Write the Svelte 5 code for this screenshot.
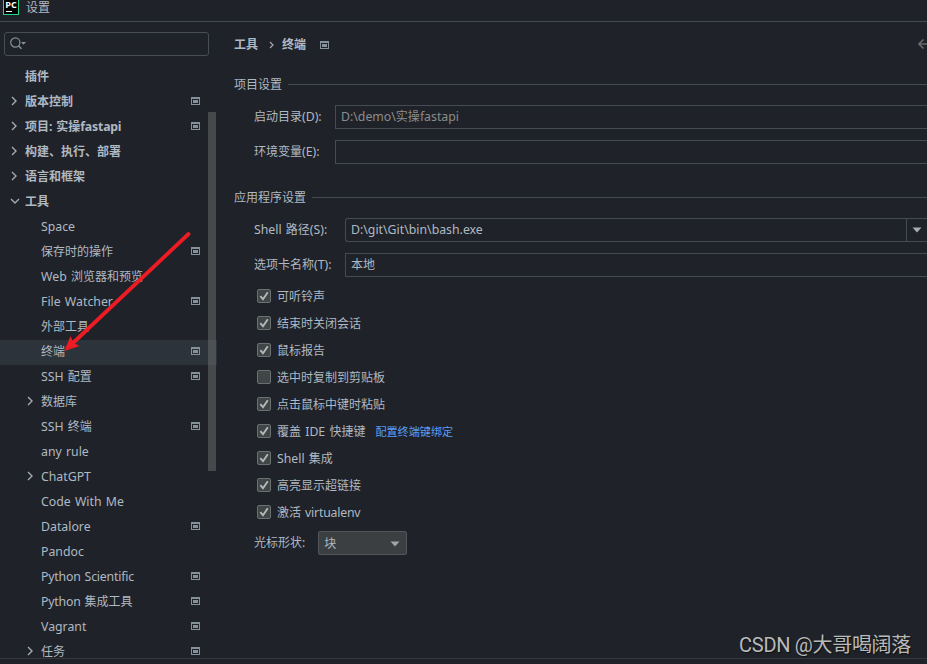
<script>
  let selected = $state("终端");
  let query = $state("");

  const tree = [
    { label: "插件", level: 0 },
    { label: "版本控制", level: 0, arrow: "right", project: true },
    { label: "项目: 实操fastapi", level: 0, arrow: "right", project: true, tight: true },
    { label: "构建、执行、部署", level: 0, arrow: "right" },
    { label: "语言和框架", level: 0, arrow: "right" },
    { label: "工具", level: 0, arrow: "down" },
    { label: "Space", level: 1 },
    { label: "保存时的操作", level: 1, project: true },
    { label: "Web 浏览器和预览", level: 1 },
    { label: "File Watcher", level: 1, project: true },
    { label: "外部工具", level: 1 },
    { label: "终端", level: 1, project: true },
    { label: "SSH 配置", level: 1, project: true },
    { label: "数据库", level: 1, arrow: "right" },
    { label: "SSH 终端", level: 1, project: true },
    { label: "any rule", level: 1 },
    { label: "ChatGPT", level: 1, arrow: "right" },
    { label: "Code With Me", level: 1 },
    { label: "Datalore", level: 1, project: true },
    { label: "Pandoc", level: 1 },
    { label: "Python Scientific", level: 1, project: true, tight: true },
    { label: "Python 集成工具", level: 1, project: true, tight: true },
    { label: "Vagrant", level: 1, project: true },
    { label: "任务", level: 1, arrow: "right", project: true },
  ];

  let options = $state([
    { label: "可听铃声", checked: true },
    { label: "结束时关闭会话", checked: true },
    { label: "鼠标报告", checked: true },
    { label: "选中时复制到剪贴板", checked: false },
    { label: "点击鼠标中键时粘贴", checked: true },
    { label: "覆盖 IDE 快捷键", checked: true, link: "配置终端键绑定" },
    { label: "Shell 集成", checked: true },
    { label: "高亮显示超链接", checked: true },
    { label: "激活 virtualenv", checked: true, tight: true },
  ]);

  // latin runs are set slightly larger than the chinese ones
  function runs(text) {
    return text.match(/[\x20-\x7e]+|[^\x20-\x7e]+/g) ?? [];
  }
</script>

{#snippet mixed(text)}<span class="mixed">{#each runs(text) as run}<span class:latin={/^[\x20-\x7e]/.test(run)}>{run}</span>{/each}</span>{/snippet}

{#snippet projectIcon()}
  <svg class="project-icon" width="9" height="8" viewBox="0 0 9 8" shape-rendering="crispEdges">
    <path fill="#84919b" fill-rule="evenodd" d="M0 0h9v8H0zM1 2v5h7V2z" />
    <path fill="#84919b" d="M2 3h5v3H2z" />
  </svg>
{/snippet}

<div class="window">
  <header class="titlebar">
    <svg class="logo" width="16" height="15" viewBox="0 0 16 15">
      <rect x="0.5" y="-0.5" width="15" height="15" fill="#000" stroke="#21d789" />
      <text x="2.300" y="8" textLength="11.500" lengthAdjust="spacingAndGlyphs">PC</text>
      <path fill="#fff" d="M3 11h6v1H3z" />
    </svg>
    <span>设置</span>
  </header>

  <div class="body">
    <aside>
      <label class="search">
        <svg width="18" height="14" viewBox="0 0 18 14" fill="none">
          <circle cx="5.3" cy="5.500" r="4.600" stroke="#84919b" stroke-width="1.2" />
          <path d="M8.500 8.800l3 3" stroke="#84919b" stroke-width="1.5" />
          <path d="M11 5h5L13.500 7.700z" fill="#84919b" />
        </svg>
        <input bind:value={query} aria-label="search" />
      </label>

      <div class="tree">
        {#each tree as item}
          <button
            class="row"
            class:group={item.level === 0}
            class:child={item.level === 1}
            class:tight={item.tight}
            class:selected={item.label === selected}
            onclick={() => (selected = item.label)}
          >
            <span class="toggle">
              {#if item.arrow}
                <svg class={item.arrow} width="10" height="10" viewBox="0 0 10 10" fill="none">
                  <path d="M2 1l4 4-4 4" stroke="#a4abb0" stroke-width="1.4" />
                </svg>
              {/if}
            </span>
            {@render mixed(item.label)}
            {#if item.project}{@render projectIcon()}{/if}
          </button>
        {/each}
        <div class="scrollbar"></div>
        <svg class="pointer" width="130" height="124" viewBox="0 0 130 124">
          <path d="M127.500 3L13 111" stroke="#ed1c24" stroke-width="3.800" stroke-linecap="round" />
          <path d="M3.300 120L9.500 105L12 110.500L14.500 113L18.500 115z" fill="#ed1c24" />
        </svg>
      </div>
    </aside>

    <main>
      <nav>
        <b>工具</b>
        <svg class="crumb" width="5" height="8" viewBox="0 0 5 8" fill="none">
          <path d="M1 1l3 3-3 3" stroke="#a4abb0" stroke-width="1.2" />
        </svg>
        <b>终端</b>
        {@render projectIcon()}
        <svg class="back" width="12" height="10" viewBox="0 0 12 10" fill="none">
          <path d="M5.500 0.500L1 5l4.500 4.500M1 5h11" stroke="#686b6a" stroke-width="1.6" />
        </svg>
      </nav>

      <h2>项目设置</h2>
      <div class="field directory">
        <span class="label">{@render mixed("启动目录(D):")}</span>
        <div class="input muted">{@render mixed("D:\\demo\\实操fastapi")}</div>
      </div>
      <div class="field environment">
        <span class="label">{@render mixed("环境变量(E):")}</span>
        <div class="input"></div>
      </div>

      <h2 class="application">应用程序设置</h2>
      <div class="field shell">
        <span class="label">{@render mixed("Shell 路径(S):")}</span>
        <div class="input combo">
          {@render mixed("D:\\git\\Git\\bin\\bash.exe")}
          <span class="drop">
            <svg width="10" height="6" viewBox="0 0 10 6"><path d="M0.500 0.500h9L5 5.500z" fill="#a8adb0" /></svg>
          </span>
        </div>
      </div>
      <div class="field tabname">
        <span class="label">{@render mixed("选项卡名称(T):")}</span>
        <div class="input">本地</div>
      </div>

      <div class="options">
        {#each options as option}
          <div class="option" class:tight={option.tight}>
            <label>
              <input type="checkbox" bind:checked={option.checked} />
              <span class="box">
                {#if option.checked}
                  <svg width="12" height="12" viewBox="0 0 12 12" fill="none">
                    <path d="M2.300 6.200l2.700 3L9.800 2.200" stroke="#b4b8b8" stroke-width="1.9" />
                  </svg>
                {/if}
              </span>
              {@render mixed(option.label)}
            </label>
            {#if option.link}<span class="link">{option.link}</span>{/if}
          </div>
        {/each}
      </div>

      <div class="cursor">
        <span>光标形状:</span>
        <div class="select">
          <span>块</span>
          <svg width="10" height="6" viewBox="0 0 10 6"><path d="M0.500 0.500h9L5 5.500z" fill="#a0a4a5" /></svg>
        </div>
      </div>
    </main>
  </div>

  <footer></footer>
  <div class="watermark">CSDN @大哥喝阔落</div>
</div>

<style>
  :global(body) {
    background: #1f2229;
  }
  .window {
    position: relative;
    display: flex;
    flex-direction: column;
    width: 927px;
    height: 664px;
    overflow: hidden;
    box-sizing: border-box;
    background: #1f2229;
    color: #afb9c2;
    font: 12px/24px "Noto Sans", "Noto Sans CJK SC", sans-serif;
  }
  .window * {
    box-sizing: border-box;
  }
  svg {
    display: block;
    flex: none;
  }
  .mixed {
    white-space: pre;
  }
  .latin {
    font-size: 12.3px;
    line-height: 1;
    word-spacing: 1px;
  }
  .tight .latin {
    letter-spacing: -0.2px;
  }
  .titlebar {
    display: flex;
    flex: none;
    gap: 7px;
    height: 22px;
    padding-left: 3px;
    border-bottom: 1px solid #454b54;
    line-height: 15px;
  }
  .logo text {
    fill: #fff;
    font: bold 8.5px "Open Sans", sans-serif;
  }
  .body {
    display: flex;
    flex: 1;
    min-height: 0;
  }
  aside {
    display: flex;
    flex-direction: column;
    width: 217px;
    padding-top: 10px;
  }
  .search {
    display: flex;
    flex: none;
    align-items: center;
    width: 205px;
    height: 24px;
    margin: 0 0 9px 4px;
    padding-left: 5px;
    border: 1px solid #464d56;
    border-radius: 3px;
  }
  .search input {
    flex: 1;
    min-width: 0;
    border: 0;
    outline: 0;
    background: none;
    color: inherit;
  }
  .tree {
    position: relative;
  }
  .row {
    display: flex;
    width: 100%;
    height: 25px;
    padding: 0 16px 0 8px;
    border: 0;
    background: none;
    color: inherit;
    font: inherit;
    line-height: 23px;
    text-align: left;
  }
  .row.group {
    font-weight: bold;
  }
  .row.child {
    padding-left: 24px;
  }
  .row.selected {
    background: #2d333a;
  }
  .toggle {
    width: 17px;
    padding: 6px 0 0 2px;
  }
  .down {
    transform: translateY(1px) rotate(90deg);
  }
  .row .project-icon {
    margin: 7px 1px 0 auto;
  }
  .scrollbar {
    position: absolute;
    top: 47px;
    left: 208px;
    width: 8px;
    height: 359px;
    background: rgba(110, 110, 110, 0.5);
  }
  .pointer {
    position: absolute;
    top: 166px;
    left: 61px;
  }
  main {
    flex: 1;
    min-width: 0;
    padding-left: 17px;
  }
  nav {
    display: flex;
    align-items: center;
    height: 45px;
  }
  .crumb {
    margin: 0 8px 0 11px;
  }
  nav .project-icon {
    margin: 1px 0 0 14px;
  }
  .back {
    margin: 0 -3px 1px auto;
  }
  h2 {
    display: flex;
    gap: 6px;
    height: 24px;
    margin: 6px 0 8px;
    font: inherit;
  }
  h2::after {
    content: "";
    flex: 1;
    height: 1px;
    margin-top: 11px;
    background: #454b54;
  }
  h2.application {
    margin-bottom: 9px;
    line-height: 25px;
  }
  h2.application::after {
    margin-top: 12px;
  }
  .field {
    display: flex;
    height: 24px;
    padding-left: 20px;
    line-height: 22px;
  }
  .label {
    flex: none;
    width: 81px;
    line-height: 24px;
  }
  .environment {
    margin: 11px 0 21px;
  }
  .shell .label,
  .tabname .label {
    width: 91px;
  }
  .tabname {
    margin-top: 11px;
  }
  .input {
    display: flex;
    flex: 1;
    padding-left: 5px;
    border: 1px solid #454b54;
    border-right: 0;
  }
  .muted {
    color: #8c8c8c;
  }
  .combo {
    border-radius: 3px 0 0 3px;
  }
  .drop {
    display: flex;
    align-items: center;
    width: 21px;
    margin-left: auto;
    padding-left: 5px;
    border-left: 1px solid #454b54;
  }
  .options {
    padding: 6px 0 0 23px;
  }
  .option {
    display: flex;
    gap: 10px;
    height: 27px;
    line-height: 28px;
  }
  .option label {
    display: flex;
    gap: 6px;
  }
  .option input {
    display: none;
  }
  .box {
    width: 14px;
    height: 14px;
    margin-top: 6px;
    border: 1px solid #6b7070;
    border-radius: 2px;
    background: #404546;
  }
  .link {
    color: #589df6;
    font-size: 11.1px;
  }
  .cursor {
    display: flex;
    gap: 13px;
    padding: 5px 0 0 20px;
  }
  .select {
    display: flex;
    align-items: center;
    justify-content: space-between;
    width: 89px;
    height: 24px;
    padding: 1px 6px 0 5px;
    border: 1px solid #52565a;
    border-radius: 2px;
    background: #3c3f41;
  }
  footer {
    flex: none;
    height: 6px;
    border-top: 1px solid #36373a;
  }
  .watermark {
    position: absolute;
    right: 16px;
    bottom: 5px;
    color: #b9babb;
    font: 20px/28px Roboto, "Noto Sans CJK SC", sans-serif;
    letter-spacing: -0.3px;
    text-shadow: 1px 1px 1px #111;
  }
</style>
